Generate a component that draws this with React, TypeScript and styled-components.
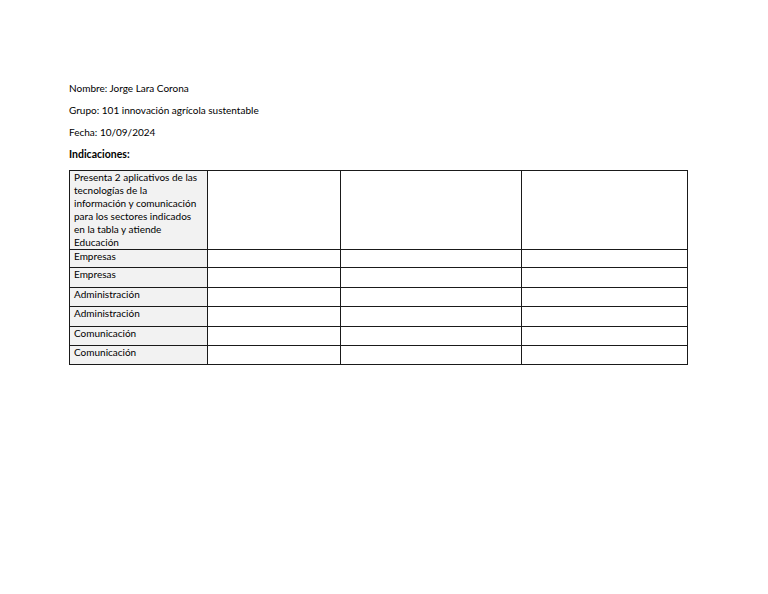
import React from "react";
import styled, { createGlobalStyle } from "styled-components";

const Global = createGlobalStyle`
  html, body { margin: 0; padding: 0; background: #ffffff; }
  body { font-family: Lato, "Open Sans", "Liberation Sans", sans-serif; color: #000; }
`;

const Page = styled.div`
  width: 768px;
  height: 594px;
  box-sizing: border-box;
  padding: 77px 0 0 69px;
  background: #ffffff;
`;

const Line = styled.p<{ $bold?: boolean }>`
  margin: 0;
  height: 22px;
  line-height: 22px;
  font-size: ${(p) => (p.$bold ? "10.5px" : "10px")};
  font-weight: ${(p) => (p.$bold ? 700 : 400)};
  white-space: nowrap;
`;

const Table = styled.table`
  margin-top: 5px;
  border-collapse: collapse;
  table-layout: fixed;
  width: 619px;
`;

const Row = styled.tr<{ $h: number }>`
  height: ${(p) => p.$h}px;
`;

const Cell = styled.td<{ $label?: boolean }>`
  border: 1px solid #1a1a1a;
  padding: 0 4px;
  vertical-align: top;
  font-size: 10px;
  line-height: 13px;
  background: ${(p) => (p.$label ? "#f2f2f2" : "#ffffff")};
  box-sizing: border-box;
`;

const cols = [138, 133, 181, 166];
const rows: { label: string; h: number }[] = [
  { label: "Empresas", h: 18 },
  { label: "Empresas", h: 20 },
  { label: "Administración", h: 19 },
  { label: "Administración", h: 20 },
  { label: "Comunicación", h: 19 },
  { label: "Comunicación", h: 19 },
];

export default function App() {
  return (
    <>
      <Global />
      <Page>
        <Line>Nombre: Jorge Lara Corona</Line>
        <Line>Grupo: 101 innovación agrícola sustentable</Line>
        <Line>Fecha: 10/09/2024</Line>
        <Line $bold>Indicaciones:</Line>
        <Table>
          <colgroup>
            {cols.map((w, i) => (
              <col key={i} style={{ width: w }} />
            ))}
          </colgroup>
          <tbody>
            <Row $h={79}>
              <Cell $label>
                Presenta 2 aplicativos de las
                <br />
                tecnologías de la
                <br />
                información y comunicación
                <br />
                para los sectores indicados
                <br />
                en la tabla y atiende
                <br />
                Educación
              </Cell>
              <Cell />
              <Cell />
              <Cell />
            </Row>
            {rows.map((r, i) => (
              <Row key={i} $h={r.h}>
                <Cell $label>{r.label}</Cell>
                <Cell />
                <Cell />
                <Cell />
              </Row>
            ))}
          </tbody>
        </Table>
      </Page>
    </>
  );
}
